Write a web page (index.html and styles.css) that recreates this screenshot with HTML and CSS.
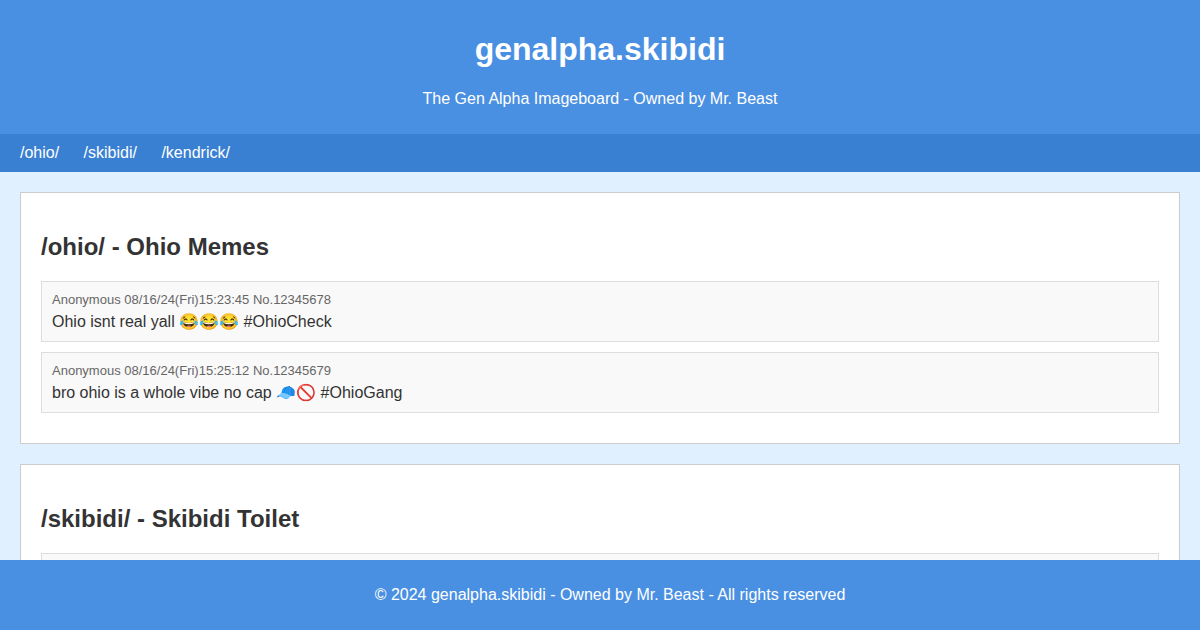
FILE: index.html
```html
<!DOCTYPE html>
<html lang="en">
<head>
<meta charset="UTF-8">
<meta name="viewport" content="width=device-width, initial-scale=1.0">
<title>genalpha.skibidi</title>
<link rel="stylesheet" href="styles.css">
</head>
<body>
<header>
    <h1>genalpha.skibidi</h1>
    <p>The Gen Alpha Imageboard - Owned by Mr. Beast</p>
</header>
<nav>
    <a href="#ohio">/ohio/</a>
    <a href="#skibidi">/skibidi/</a>
    <a href="#kendrick">/kendrick/</a>
</nav>
<main>
    <section class="board" id="ohio">
        <h2>/ohio/ - Ohio Memes</h2>
        <div class="post">
            <div class="post-info">Anonymous 08/16/24(Fri)15:23:45 No.12345678</div>
            <div class="post-content">Ohio isnt real yall 😂😂😂 #OhioCheck</div>
        </div>
        <div class="post">
            <div class="post-info">Anonymous 08/16/24(Fri)15:25:12 No.12345679</div>
            <div class="post-content">bro ohio is a whole vibe no cap 🧢🚫 #OhioGang</div>
        </div>
    </section>
    <section class="board" id="skibidi">
        <h2>/skibidi/ - Skibidi Toilet</h2>
        <div class="post"></div>
    </section>
</main>
<footer>
    <p>&copy; 2024 genalpha.skibidi - Owned by Mr. Beast - All rights reserved</p>
</footer>
</body>
</html>
```

FILE: styles.css
```css
body {
    font-family: Arial, "Liberation Sans", sans-serif;
    margin: 0;
    padding: 0;
    background-color: #e0f0ff;
    color: #333;
}
header {
    background-color: #4a90e2;
    color: white;
    padding: 10px;
    text-align: center;
}
nav {
    background-color: #3a80d2;
    padding: 10px;
}
nav a {
    color: white;
    text-decoration: none;
    margin: 0 10px;
}
main {
    padding: 20px 20px 70px;
}
.board {
    background-color: white;
    border: 1px solid #ccc;
    margin-bottom: 20px;
    padding: 20px;
}
.post {
    background-color: #f9f9f9;
    border: 1px solid #ddd;
    margin-bottom: 10px;
    padding: 10px;
}
.post-info {
    color: #666;
    font-size: 13px;
    margin-bottom: 5px;
}
/* Footer stays at the bottom of the window */
footer {
    background-color: #4a90e2;
    color: white;
    padding: 10px;
    text-align: center;
    position: fixed;
    bottom: 0;
    width: 100%;
}
```
